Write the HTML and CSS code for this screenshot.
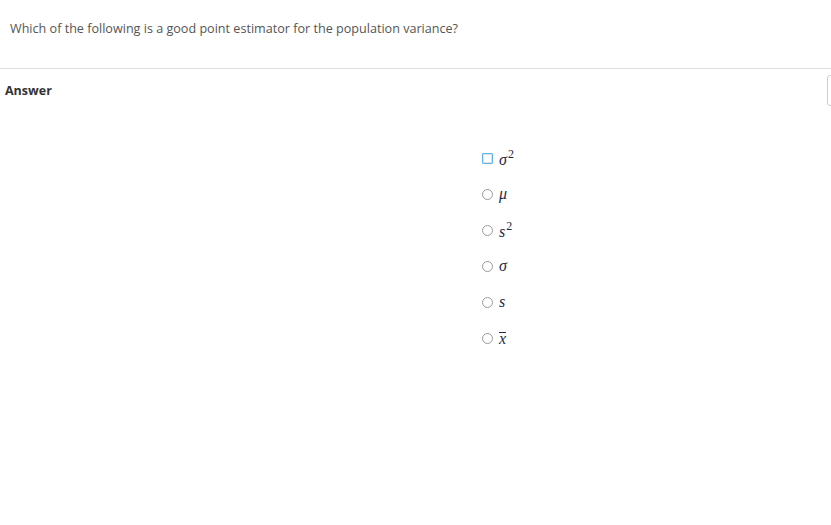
FILE: index.html
```html
<html>

<head>
	<title>Question</title>
	<meta name="viewport" content="width=device-width, initial-scale=1.0">

	<link rel="stylesheet" href="styles.css">
</head>

<body>
	<div class="question">
		<p>Which of the following is a good point estimator for the population variance?</p>
	</div>

	<div class="answer">
		<div class="answer-head">
			<h2>Answer</h2>
			<div class="side-box"></div>
		</div>

		<ul class="options">
			<li><span class="radio focus"></span><i class="math">&sigma;<sup>2</sup></i></li>
			<li><span class="radio"></span><i class="math">&mu;</i></li>
			<li><span class="radio"></span><i class="math">s<sup>2</sup></i></li>
			<li><span class="radio"></span><i class="math">&sigma;</i></li>
			<li><span class="radio"></span><i class="math">s</i></li>
			<li><span class="radio"></span><i class="math"><span class="bar">x</span></i></li>
		</ul>
	</div>
</body>

</html>
```

FILE: styles.css
```css
body {
	font-family: 'Open Sans', sans-serif;
	background-color: #fff;
	margin: 0;
	overflow: hidden;
}

.question {
	padding: 20px 10px 0 10px;
	height: 48px;
	border-bottom: 1px solid #dedede;
}

.question p {
	margin: 0;
	font-size: 12.6px;
	color: #555;
}

.answer-head {
	display: flex;
	align-items: flex-start;
	justify-content: space-between;
	padding-top: 6px;
}

.answer-head h2 {
	margin: 7px 0 0 5px;
	font-size: 12.5px;
	font-weight: 700;
	color: #333;
}

.side-box {
	width: 20px;
	height: 29px;
	border: 1px solid #c8d0d8;
	border-radius: 3px;
	margin-right: -18px;
}

.options {
	list-style: none;
	margin: 43px 0 0 0;
	padding: 0 0 0 482px;
	display: flex;
	flex-direction: column;
	gap: 18px;
}

.options li {
	display: flex;
	align-items: center;
	height: 18px;
}

.radio {
	width: 9px;
	height: 9px;
	border: 1px solid #9a9a9a;
	border-radius: 50%;
	margin-right: 6px;
}

.radio.focus {
	border-color: #62b2e6;
	border-radius: 1px;
	box-shadow: inset 0 0 0 1px #e2e2e2;
}

i.math {
	font-family: "Liberation Serif", serif;
	font-style: italic;
	font-size: 16px;
	color: #1e2a44;
	line-height: 1;
}

i.math sup {
	font-style: normal;
	font-size: 12px;
	vertical-align: 7px;
	margin-left: 1px;
}

.bar {
	border-top: 1px solid #1e2a44;
	display: inline-block;
	line-height: 0.75;
}
```
